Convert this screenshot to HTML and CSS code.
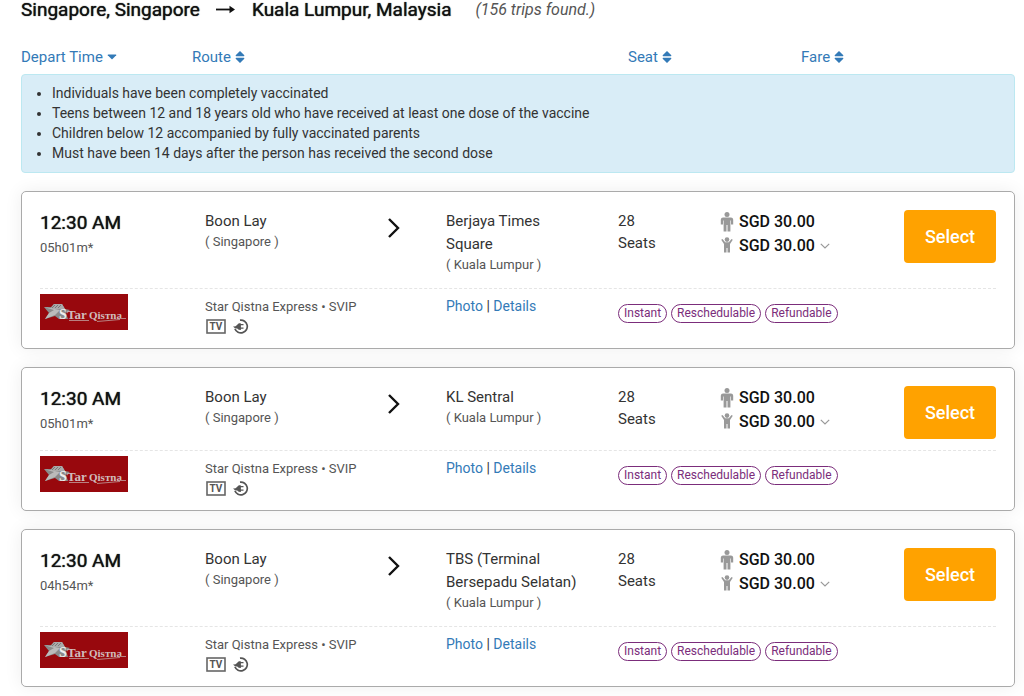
FILE: index.html
```html
<!DOCTYPE html>
<html lang="en">
<head>
    <meta charset="UTF-8">
    <meta name="viewport" content="width=device-width, initial-scale=1.0">
    <title>Singapore to Kuala Lumpur trips</title>
    <link rel="stylesheet" href="styles.css">
</head>
<body>
    <!-- Shared icons -->
    <svg class="sprite" aria-hidden="true">
        <symbol id="icon-sort" viewBox="0 0 10 12">
            <path d="M5 0 9.3 4.2Q9.6 5.2 8.7 5.2H1.3Q.4 5.2.7 4.2zM5 12 .7 7.8Q.4 6.8 1.3 6.8H8.7Q9.6 6.8 9.3 7.8z"/>
        </symbol>
        <symbol id="icon-down" viewBox="0 0 10 12">
            <path d="M1.3 3.4H8.7Q9.6 3.4 9.2 4.2L5.5 8.1Q5 8.5 4.5 8.1L.8 4.2Q.4 3.4 1.3 3.4z"/>
        </symbol>
        <symbol id="icon-next" viewBox="0 0 14 22">
            <path d="M2 2 11 11 2 20" fill="none" stroke="#111" stroke-width="2.4"/>
        </symbol>
        <symbol id="icon-adult" viewBox="0 0 14 20">
            <circle cx="7" cy="2.6" r="2.5"/>
            <path d="M3 5.4H11Q13 5.4 13.2 7.4V12.5H11V8.4H10.4V19.6H7.5V13H6.5V19.6H3.6V8.4H3V12.5H.8V7.4Q1 5.4 3 5.4z"/>
        </symbol>
        <symbol id="icon-child" viewBox="0 0 14 20">
            <circle cx="7" cy="3.6" r="2.3"/>
            <path d="M1.2 3.8 2.5 2.9 5.2 6.2H8.8L11.5 2.9 12.8 3.8 10 8V16.4H7.5V12H6.5V16.4H4V8z"/>
        </symbol>
        <symbol id="icon-tv" viewBox="0 0 20 15">
            <rect x="1" y="1" width="18" height="13" fill="none" stroke="#666" stroke-width="1.6"/>
            <text x="10" y="11" text-anchor="middle" font-size="10" font-weight="700">TV</text>
        </symbol>
        <symbol id="icon-plug" viewBox="0 0 16 15">
            <path d="M7 1.2A6.4 6.4 0 1 1 1.9 9.8" fill="none" stroke="#555" stroke-width="1.7"/>
            <path d="M0 7.5Q2.3 8 4 6 5.2 4 7.6 4V5H10.5V6.3H7.9V8.4H10.5V9.7H7.9V11Q5.4 11 4.2 9.5 2 10 0 7.5z"/>
        </symbol>
        <symbol id="icon-more" viewBox="0 0 10 8">
            <path d="M.8 1.8 5 6 9.2 1.8" fill="none" stroke="#999" stroke-width="1.2"/>
        </symbol>
        <symbol id="logo-star" viewBox="0 0 88 36">
            <rect width="88" height="36" fill="#98080d"/>
            <path d="M4 13H11L14 10H22L25 15 30 16 26 19 28 25H19L15 22 5 25 9 19z" fill="#8a8a8a"/>
            <path d="M14 10H22L25 15H10z" fill="#aaa"/>
            <path d="M4 13 14 16 9 19 5 25 15 21 20 16z" fill="#bbb"/>
            <path d="M12 14 15 11M15 14 18 11M18 14 21 11" stroke="#666" stroke-width=".7"/>
            <text x="19" y="25" font-size="14" font-weight="700" fill="#eee">S</text>
            <text x="27" y="25" font-size="13" font-weight="700" fill="#d0bcbc">Tar</text>
            <text x="49" y="25" font-size="11" font-weight="700" fill="#d0bcbc">Qisтna</text>
            <path d="M29 26.5H49M57 27.5 80 25.5M80 24.5H86" stroke="#b98080" stroke-width="1"/>
        </symbol>
    </svg>

    <main class="results">
        <h1 class="route-title">
            <span>Singapore, Singapore</span>
            <svg class="title-arrow" viewBox="0 0 20 10" aria-label="to"><path d="M0 4.5H15" stroke="#111" stroke-width="1.8"/><path d="M13.5.8 19 4.5 13.5 8.2z" fill="#111"/></svg>
            <span>Kuala Lumpur, Malaysia</span>
            <em class="trip-count">(156 trips found.)</em>
        </h1>

        <nav class="sort-bar" aria-label="Sort trips">
            <a href="#">Depart Time <svg><use href="#icon-down"/></svg></a>
            <a href="#">Route <svg><use href="#icon-sort"/></svg></a>
            <a href="#">Seat <svg><use href="#icon-sort"/></svg></a>
            <a href="#">Fare <svg><use href="#icon-sort"/></svg></a>
        </nav>

        <ul class="notice">
            <li>Individuals have been completely vaccinated</li>
            <li>Teens between 12 and 18 years old who have received at least one dose of the vaccine</li>
            <li>Children below 12 accompanied by fully vaccinated parents</li>
            <li>Must have been 14 days after the person has received the second dose</li>
        </ul>

        <article class="trip">
            <div class="trip-main">
                <div>
                    <div class="time">12:30 AM</div>
                    <div class="duration">05h01m*</div>
                </div>
                <div class="stop">
                    <div class="place">Boon Lay</div>
                    <div class="city">( Singapore )</div>
                </div>
                <svg class="next"><use href="#icon-next"/></svg>
                <div class="stop">
                    <div class="place">Berjaya Times Square</div>
                    <div class="city">( Kuala Lumpur )</div>
                </div>
                <div class="seats">28<br>Seats</div>
                <div class="fares">
                    <div class="fare"><svg class="person"><use href="#icon-adult"/></svg>SGD 30.00</div>
                    <div class="fare"><svg class="person"><use href="#icon-child"/></svg>SGD 30.00<button class="more" aria-label="Fare details"><svg><use href="#icon-more"/></svg></button></div>
                </div>
                <button class="select">Select</button>
            </div>
            <div class="trip-extra">
                <svg class="logo" role="img" aria-label="Star Qistna"><use href="#logo-star"/></svg>
                <div class="operator">
                    <div>Star Qistna Express • SVIP</div>
                    <div class="amenities"><svg class="tv"><use href="#icon-tv"/></svg><svg class="plug"><use href="#icon-plug"/></svg></div>
                </div>
                <div class="links"><a href="#">Photo</a> | <a href="#">Details</a></div>
                <div class="tags"><span>Instant</span><span>Reschedulable</span><span>Refundable</span></div>
            </div>
        </article>

        <article class="trip">
            <div class="trip-main">
                <div>
                    <div class="time">12:30 AM</div>
                    <div class="duration">05h01m*</div>
                </div>
                <div class="stop">
                    <div class="place">Boon Lay</div>
                    <div class="city">( Singapore )</div>
                </div>
                <svg class="next"><use href="#icon-next"/></svg>
                <div class="stop">
                    <div class="place">KL Sentral</div>
                    <div class="city">( Kuala Lumpur )</div>
                </div>
                <div class="seats">28<br>Seats</div>
                <div class="fares">
                    <div class="fare"><svg class="person"><use href="#icon-adult"/></svg>SGD 30.00</div>
                    <div class="fare"><svg class="person"><use href="#icon-child"/></svg>SGD 30.00<button class="more" aria-label="Fare details"><svg><use href="#icon-more"/></svg></button></div>
                </div>
                <button class="select">Select</button>
            </div>
            <div class="trip-extra">
                <svg class="logo" role="img" aria-label="Star Qistna"><use href="#logo-star"/></svg>
                <div class="operator">
                    <div>Star Qistna Express • SVIP</div>
                    <div class="amenities"><svg class="tv"><use href="#icon-tv"/></svg><svg class="plug"><use href="#icon-plug"/></svg></div>
                </div>
                <div class="links"><a href="#">Photo</a> | <a href="#">Details</a></div>
                <div class="tags"><span>Instant</span><span>Reschedulable</span><span>Refundable</span></div>
            </div>
        </article>

        <article class="trip">
            <div class="trip-main">
                <div>
                    <div class="time">12:30 AM</div>
                    <div class="duration">04h54m*</div>
                </div>
                <div class="stop">
                    <div class="place">Boon Lay</div>
                    <div class="city">( Singapore )</div>
                </div>
                <svg class="next"><use href="#icon-next"/></svg>
                <div class="stop">
                    <div class="place">TBS (Terminal Bersepadu Selatan)</div>
                    <div class="city">( Kuala Lumpur )</div>
                </div>
                <div class="seats">28<br>Seats</div>
                <div class="fares">
                    <div class="fare"><svg class="person"><use href="#icon-adult"/></svg>SGD 30.00</div>
                    <div class="fare"><svg class="person"><use href="#icon-child"/></svg>SGD 30.00<button class="more" aria-label="Fare details"><svg><use href="#icon-more"/></svg></button></div>
                </div>
                <button class="select">Select</button>
            </div>
            <div class="trip-extra">
                <svg class="logo" role="img" aria-label="Star Qistna"><use href="#logo-star"/></svg>
                <div class="operator">
                    <div>Star Qistna Express • SVIP</div>
                    <div class="amenities"><svg class="tv"><use href="#icon-tv"/></svg><svg class="plug"><use href="#icon-plug"/></svg></div>
                </div>
                <div class="links"><a href="#">Photo</a> | <a href="#">Details</a></div>
                <div class="tags"><span>Instant</span><span>Reschedulable</span><span>Refundable</span></div>
            </div>
        </article>
    </main>
</body>
</html>
```
FILE: styles.css
```css
:root {
    --link-color: #337ab7;
    --text-color: #333;
    --muted-color: #555;
    --strong-color: #111;
    --tag-color: #7b2d7b;
    --button-color: #ffa200;
}

/* Reset and base styles */
* {
    margin: 0;
    padding: 0;
    box-sizing: border-box;
}

body {
    font-family: Roboto, Arial, sans-serif;
    font-size: 15px;
    color: var(--text-color);
    background: #fff;
}

a {
    color: var(--link-color);
    text-decoration: none;
}

button {
    font-family: inherit;
    border: none;
    cursor: pointer;
}

svg {
    display: block;
}

.sprite {
    display: none;
}

.results {
    padding: 0 9px 9px 21px;
}

/* Title */
.route-title {
    display: flex;
    align-items: center;
    font-size: 19px;
    font-weight: 400;
    line-height: 20px;
    color: var(--strong-color);
}

.route-title span,
.time {
    text-shadow: 0 0 1px var(--strong-color);
}

.title-arrow {
    width: 20px;
    height: 10px;
    margin: 0 16px;
}

.trip-count {
    margin-left: 24px;
    font-size: 16px;
    font-weight: 400;
    color: var(--muted-color);
}

/* Sorting links */
.sort-bar {
    display: grid;
    grid-template-columns: 171fr 436fr 173fr 214fr;
    margin-top: 27px;
    line-height: 20px;
}

.sort-bar a {
    display: flex;
    align-items: center;
    gap: 4px;
}

.sort-bar svg {
    width: 10px;
    height: 12px;
    fill: var(--link-color);
}

/* Notice box */
.notice {
    margin-top: 7px;
    padding: 8px 30px 9px;
    font-size: 14px;
    line-height: 20px;
    background: #d9edf7;
    border: 1px solid #bce8f1;
    border-radius: 4px;
}

/* Trip cards */
.trip {
    margin-top: 18px;
    padding: 18px 18px 0;
    border: 1px solid #aaa;
    border-radius: 5px;
    background: #fff;
    box-shadow: 0 0 18px rgba(0, 0, 0, 0.07);
}

.trip-main {
    display: grid;
    grid-template-columns: 165fr 182fr 59fr 172fr 102fr 184fr 92fr;
    align-items: start;
    padding-bottom: 11px;
    border-bottom: 1px dashed #e5e5e5;
}

.time {
    font-size: 19px;
    line-height: 25px;
    color: var(--strong-color);
}

.duration {
    font-size: 13px;
    line-height: 26px;
    color: var(--muted-color);
}

.stop {
    padding: 0 32px 3px 0;
}

.place {
    line-height: 23px;
}

.city {
    font-size: 13px;
    line-height: 18px;
    color: var(--muted-color);
}

.next {
    width: 14px;
    height: 22px;
    margin-top: 7px;
}

.seats {
    line-height: 22px;
}

.fare {
    display: flex;
    align-items: center;
    font-size: 16px;
    font-weight: 500;
    line-height: 24px;
    color: var(--strong-color);
}

.person {
    width: 14px;
    height: 20px;
    margin-right: 5px;
    fill: #999;
}

.more {
    margin-left: 5px;
    background: none;
}

.more svg {
    width: 10px;
    height: 8px;
}

.select {
    height: 53px;
    font-size: 18px;
    font-weight: 500;
    color: #fff;
    background: var(--button-color);
    border-radius: 4px;
}

.trip-extra {
    display: grid;
    grid-template-columns: 165fr 241fr 172fr 378fr;
    align-items: start;
    min-height: 59px;
    padding-top: 5px;
}

.logo {
    width: 88px;
    height: 36px;
    font-family: "Liberation Serif", serif;
}

.operator {
    padding-top: 3px;
    font-size: 13px;
    line-height: 20px;
    color: var(--muted-color);
}

.amenities {
    display: flex;
    align-items: center;
    gap: 7px;
    height: 19px;
    padding-left: 1px;
    fill: var(--muted-color);
}

.tv {
    width: 20px;
    height: 15px;
}

.plug {
    width: 16px;
    height: 15px;
}

.links {
    padding-top: 2px;
    font-size: 14px;
    line-height: 20px;
}

.tags {
    display: flex;
    flex-wrap: wrap;
    gap: 4px;
    padding-top: 10px;
}

.tags span {
    padding: 0 5px;
    font-size: 12px;
    line-height: 17px;
    color: var(--tag-color);
    border: 1px solid var(--tag-color);
    border-radius: 10px;
}
```
